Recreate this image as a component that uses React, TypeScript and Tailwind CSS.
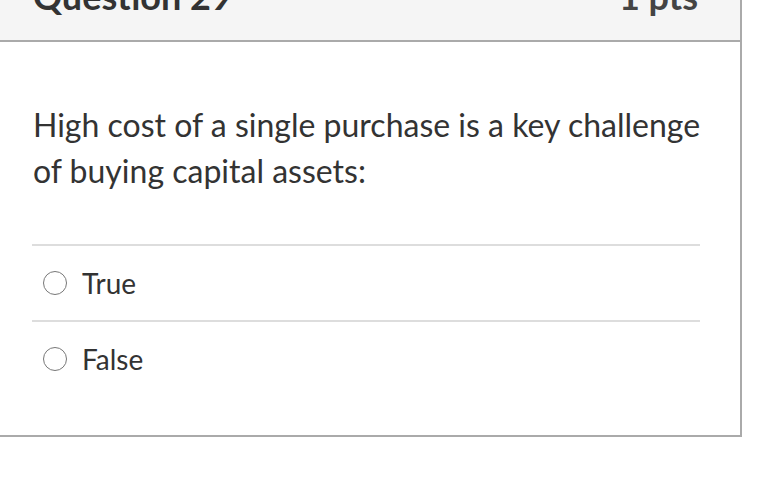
const options = ['True', 'False'];

export default function App() {
  return (
    <div className="min-h-screen overflow-hidden bg-white font-['Lato',sans-serif] text-[#333]">
      <div className="-ml-2 -mt-[52px] w-[750px] border-2 border-[#aaa]">
        {/* header */}
        <div className="flex items-baseline justify-between border-b-2 border-[#aaa] bg-[#f5f5f5] pl-[39px] pr-[42px] pt-6 pb-[22px]">
          <h2 className="text-[36px] font-bold leading-[44px]">Question 29</h2>
          <span className="text-[36px] font-bold leading-[44px] text-[#444]">1 pts</span>
        </div>

        {/* body */}
        <div className="pl-[38px] pr-10 pt-[60px] pb-[39px]">
          <p className="-mr-4 mb-[50px] pl-px text-[32px] leading-[46px]">
            High cost of a single purchase is a key challenge of buying capital assets:
          </p>
          {options.map(opt => (
            <label key={opt} className="flex h-[76px] items-center border-t-2 border-[#ddd]">
              <span className="ml-[11px] h-[24px] w-[24px] rounded-full border-[1.5px] border-[#777] bg-white" />
              <span className="ml-[15px] text-[28px]">{opt}</span>
            </label>
          ))}
        </div>
      </div>
    </div>
  );
}
